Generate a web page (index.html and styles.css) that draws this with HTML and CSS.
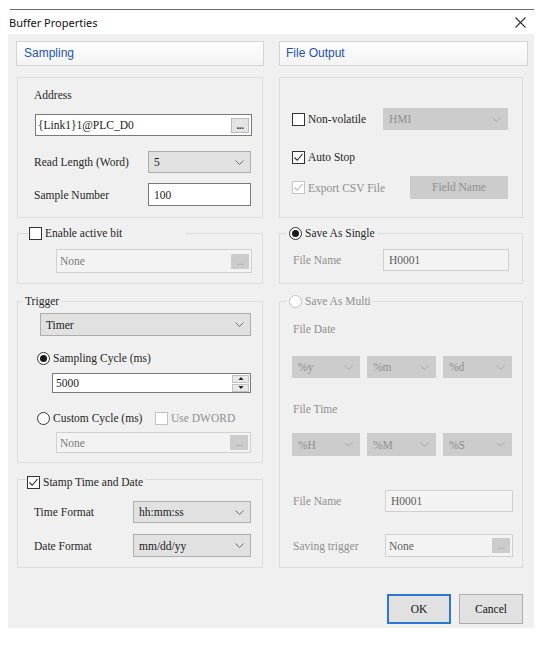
FILE: index.html
```html
<!DOCTYPE html>
<html>
<head>
<meta charset="utf-8">
<title>Buffer Properties</title>
<link rel="stylesheet" href="styles.css">
</head>
<body>
<div class="window">
  <div class="topline"></div>
  <div class="titlebar">
    <span class="title">Buffer Properties</span>
    <svg class="close" viewBox="0 0 11 11"><path d="M0.5 0.5L10.5 10.5M10.5 0.5L0.5 10.5" stroke="#333" stroke-width="1.1" fill="none"/></svg>
  </div>
  <div class="dialog">
    <div class="col col-left">
      <div class="tab">Sampling</div>

      <div class="group g-addr">
        <div class="lbl">Address</div>
        <div class="input addr"><span>{Link1}1@PLC_D0</span><span class="dots-btn">...</span></div>
        <div class="frow r-len">
          <span>Read Length (Word)</span>
          <div class="select"><span>5</span><svg class="chev" viewBox="0 0 9 5"><polyline points="0.5,0.5 4.5,4.5 8.5,0.5"/></svg></div>
        </div>
        <div class="frow r-num">
          <span>Sample Number</span>
          <div class="input"><span>100</span></div>
        </div>
      </div>

      <div class="group g-enable">
        <div class="legend lg-enable"><span class="cb"></span><span>Enable active bit</span></div>
        <div class="input dis none1"><span>None</span><span class="dots-btn dis">...</span></div>
      </div>

      <div class="group g-trigger">
        <div class="legend lg-trigger"><span>Trigger</span></div>
        <div class="select timer"><span>Timer</span><svg class="chev" viewBox="0 0 9 5"><polyline points="0.5,0.5 4.5,4.5 8.5,0.5"/></svg></div>
        <div class="opt r-samp"><span class="rb on"></span><span>Sampling Cycle (ms)</span></div>
        <div class="input spin">
          <span>5000</span>
          <span class="spin-btns">
            <span class="spin-btn"><svg viewBox="0 0 7 4"><polygon points="0,4 3.5,0 7,4"/></svg></span>
            <span class="spin-btn"><svg viewBox="0 0 7 4"><polygon points="0,0 3.5,4 7,0"/></svg></span>
          </span>
        </div>
        <div class="opt r-custom"><span class="rb"></span><span class="custom-lbl">Custom Cycle (ms)</span><span class="cb dis"></span><span class="muted">Use DWORD</span></div>
        <div class="input dis none2"><span>None</span><span class="dots-btn dis">...</span></div>
      </div>

      <div class="group g-stamp">
        <div class="legend lg-stamp"><span class="cb on"><svg viewBox="0 0 11 11"><polyline points="1.5,5.5 4.2,8.3 9.5,2"/></svg></span><span>Stamp Time and Date</span></div>
        <div class="frow r-time">
          <span>Time Format</span>
          <div class="select"><span>hh:mm:ss</span><svg class="chev" viewBox="0 0 9 5"><polyline points="0.5,0.5 4.5,4.5 8.5,0.5"/></svg></div>
        </div>
        <div class="frow r-date">
          <span>Date Format</span>
          <div class="select"><span>mm/dd/yy</span><svg class="chev" viewBox="0 0 9 5"><polyline points="0.5,0.5 4.5,4.5 8.5,0.5"/></svg></div>
        </div>
      </div>
    </div>

    <div class="col col-right">
      <div class="tab tab-right">File Output</div>

      <div class="group g-out">
        <div class="frow r-nv">
          <span class="opt"><span class="cb"></span><span>Non-volatile</span></span>
          <div class="select dis"><span>HMI</span><svg class="chev" viewBox="0 0 9 5"><polyline points="0.5,0.5 4.5,4.5 8.5,0.5"/></svg></div>
        </div>
        <div class="opt r-auto"><span class="cb on"><svg viewBox="0 0 11 11"><polyline points="1.5,5.5 4.2,8.3 9.5,2"/></svg></span><span>Auto Stop</span></div>
        <div class="frow r-csv">
          <span class="opt"><span class="cb on dis"><svg viewBox="0 0 11 11"><polyline points="1.5,5.5 4.2,8.3 9.5,2"/></svg></span><span class="muted">Export CSV File</span></span>
          <div class="btn-dis">Field Name</div>
        </div>
      </div>

      <div class="group g-single">
        <div class="legend lg-single"><span class="rb on"></span><span>Save As Single</span></div>
        <div class="frow r-sname">
          <span class="muted">File Name</span>
          <div class="input dis"><span class="val">H0001</span></div>
        </div>
      </div>

      <div class="group g-multi">
        <div class="legend lg-multi"><span class="rb dis"></span><span class="muted">Save As Multi</span></div>
        <div class="lbl muted m-date">File Date</div>
        <div class="sel-row sr-date">
          <div class="select dis s68"><span>%y</span><svg class="chev" viewBox="0 0 9 5"><polyline points="0.5,0.5 4.5,4.5 8.5,0.5"/></svg></div>
          <div class="select dis s69"><span>%m</span><svg class="chev" viewBox="0 0 9 5"><polyline points="0.5,0.5 4.5,4.5 8.5,0.5"/></svg></div>
          <div class="select dis s69"><span>%d</span><svg class="chev" viewBox="0 0 9 5"><polyline points="0.5,0.5 4.5,4.5 8.5,0.5"/></svg></div>
        </div>
        <div class="lbl muted m-time">File Time</div>
        <div class="sel-row sr-time">
          <div class="select dis s68"><span>%H</span><svg class="chev" viewBox="0 0 9 5"><polyline points="0.5,0.5 4.5,4.5 8.5,0.5"/></svg></div>
          <div class="select dis s69"><span>%M</span><svg class="chev" viewBox="0 0 9 5"><polyline points="0.5,0.5 4.5,4.5 8.5,0.5"/></svg></div>
          <div class="select dis s69"><span>%S</span><svg class="chev" viewBox="0 0 9 5"><polyline points="0.5,0.5 4.5,4.5 8.5,0.5"/></svg></div>
        </div>
        <div class="frow r-mname">
          <span class="muted">File Name</span>
          <div class="input dis"><span class="val">H0001</span></div>
        </div>
        <div class="frow r-mtrig">
          <span class="muted">Saving trigger</span>
          <div class="input dis"><span class="val">None</span><span class="dots-btn dis">...</span></div>
        </div>
      </div>

      <div class="buttons">
        <div class="btn btn-ok">OK</div>
        <div class="btn">Cancel</div>
      </div>
    </div>
  </div>
</div>
</body>
</html>
```

FILE: styles.css
```css
* { box-sizing: border-box; }
html, body { margin: 0; padding: 0; background: #ffffff; }
body {
  font-family: "Liberation Serif", "Times New Roman", serif;
  font-size: 11.5px;
  color: #262626;
  width: 557px;
  height: 646px;
  overflow: hidden;
}
.window { width: 526px; margin-left: 8px; }
.topline { height: 1px; margin-top: 9px; margin-left: 2px; background: #707070; }
.titlebar {
  height: 24px;
  display: flex;
  align-items: center;
  justify-content: space-between;
  padding: 0 8px 0 1px;
}
.title { font-family: "Noto Sans", "Liberation Sans", sans-serif; font-size: 11px; color: #111; }
.close { width: 11px; height: 11px; display: block; }

.dialog {
  height: 594px;
  background: #f0f0f0;
  display: flex;
  padding: 7px 0 0 8px;
}
.col { display: flex; flex-direction: column; }
.col-left { width: 248px; }
.col-right { width: 249px; margin-left: 15px; }

.tab {
  height: 25px;
  border: 1px solid #d4d4d4;
  background: linear-gradient(#fefefe, #f3f3f3);
  font-family: "Liberation Sans", Arial, sans-serif;
  font-size: 12px;
  color: #2354ac;
  line-height: 23px;
  padding-left: 7px;
}
.tab-right { padding-left: 6px; }

.group { border: 1px solid #dcdcdc; display: flex; flex-direction: column; align-items: flex-start; }
.col-left .group { width: 246px; margin-left: 1px; }
.col-right .group { width: 244px; }

.legend {
  display: flex;
  align-items: center;
  height: 14px;
  margin-top: -8px;
  background: #f0f0f0;
  padding: 0 2px;
  gap: 3px;
  white-space: nowrap;
}

.lbl { line-height: 14px; height: 14px; }
.muted { color: #8f8f8f; }

/* controls */
.input {
  display: flex;
  align-items: center;
  justify-content: space-between;
  border: 1px solid #7a7a7a;
  background: #ffffff;
  padding-left: 3px;
  color: #1a1a1a;
}
.input.dis { background: #f3f3f3; border-color: #d0d0d0; color: #7a7a7a; }
.input .val { color: #5e5e5e; }
.select {
  display: flex;
  align-items: center;
  justify-content: space-between;
  border: 1px solid #adadad;
  background: #e1e1e1;
  padding: 0 6px 0 5px;
  color: #1a1a1a;
}
.select.dis { background: #cccccc; border-color: #cccccc; color: #8f8f8f; }
.chev { width: 9px; height: 5px; display: block; }
.chev polyline { fill: none; stroke: #6b6b6b; stroke-width: 1; }
.select.dis .chev polyline { stroke: #a8a8a8; }

.dots-btn {
  width: 18px;
  height: 15px;
  margin-right: 2px;
  border: 1px solid #b9b9b9;
  background: #e4e4e4;
  font-family: "Liberation Sans", Arial, sans-serif;
  font-weight: bold;
  font-size: 10px;
  line-height: 14px;
  text-align: center;
  color: #1f2f55;
  letter-spacing: -0.5px;
}
.dots-btn.dis { border-color: #cccccc; background: #cccccc; color: #9a9a9a; font-weight: normal; }

.cb {
  width: 13px; height: 13px;
  border: 1px solid #333;
  background: #fff;
  flex: none;
  display: flex; align-items: center; justify-content: center;
}
.cb svg { width: 11px; height: 11px; display: block; }
.cb svg polyline { fill: none; stroke: #222; stroke-width: 1.1; }
.cb.dis { border-color: #c4c4c4; }
.cb.dis svg polyline { stroke: #b8b8b8; }

.rb {
  width: 13px; height: 13px;
  border: 1px solid #333;
  border-radius: 50%;
  background: #fff;
  flex: none;
  display: flex; align-items: center; justify-content: center;
}
.rb.on::after { content: ""; width: 7px; height: 7px; border-radius: 50%; background: #1a1a1a; }
.rb.dis { border-color: #c4c4c4; }

.opt { display: flex; align-items: center; gap: 3px; height: 14px; white-space: nowrap; }

.frow { display: grid; align-items: center; }

/* left: address group */
.g-addr { height: 141px; padding: 10px 0 0 16px; margin-top: 11px; }
.addr { margin-top: 12px; margin-left: 1px; width: 217px; height: 22px; padding-left: 2px; }
.r-len { margin-top: 15px; grid-template-columns: 114px 103px; height: 22px; }
.r-len .select { height: 22px; }
.r-num { margin-top: 10px; grid-template-columns: 114px 103px; height: 23px; }
.r-num .input { height: 23px; padding-left: 5px; }

/* enable group */
.g-enable { margin-top: 15px; height: 51px; }
.lg-enable { margin-left: 10px; padding-left: 1px; width: 157px; }
.none1 { margin-top: 9px; margin-left: 38px; width: 196px; height: 24px; }

/* trigger group */
.g-trigger { margin-top: 17px; height: 162px; }
.lg-trigger { margin-left: 5px; }
.timer { margin-top: 5px; margin-left: 22px; width: 211px; height: 23px; }
.r-samp { margin-top: 15px; margin-left: 19px; }
.spin { margin-top: 8px; margin-left: 34px; width: 199px; height: 20px; }
.spin-btns { display: flex; flex-direction: column; gap: 1px; margin-right: 1px; }
.spin-btn {
  width: 17px; height: 8px;
  border: 1px solid #c2c2c2;
  background: #e8e8e8;
  display: flex; align-items: center; justify-content: center;
}
.spin-btn svg { width: 6px; height: 3px; display: block; fill: #222; }
.r-custom { margin-top: 18px; margin-left: 19px; }
.custom-lbl { width: 99px; }
.none2 { margin-top: 7px; margin-left: 38px; width: 195px; height: 21px; }

/* stamp group */
.g-stamp { margin-top: 16px; height: 89px; }
.lg-stamp { margin-top: -5px; margin-left: 8px; padding-left: 1px; }
.r-time { margin-top: 12px; margin-left: 16px; grid-template-columns: 99px 118px; height: 22px; }
.r-time .select { height: 22px; }
.r-date { margin-top: 11px; margin-left: 16px; grid-template-columns: 99px 118px; height: 23px; }
.r-date .select { height: 23px; }

/* right: output group */
.g-out { height: 141px; margin-top: 11px; }
.r-nv { margin-top: 30px; margin-left: 12px; grid-template-columns: 91px 125px; height: 22px; }
.r-nv .select { height: 22px; }
.r-auto { margin-top: 20px; margin-left: 12px; }
.r-csv { margin-top: 12px; margin-left: 12px; grid-template-columns: 118px 98px; height: 23px; }
.btn-dis {
  height: 23px;
  background: #cccccc;
  color: #8f8f8f;
  text-align: center;
  line-height: 23px;
}

/* save single */
.g-single { margin-top: 15px; height: 51px; }
.lg-single { margin-left: 7px; }
.r-sname { margin-top: 9px; margin-left: 13px; grid-template-columns: 90px 126px; height: 22px; }
.r-sname .input { height: 22px; padding-left: 5px; }

/* save multi */
.g-multi { margin-top: 17px; height: 267px; }
.lg-multi { margin-left: 7px; }
.m-date { margin-top: 14px; margin-left: 13px; }
.sel-row { display: flex; gap: 7px; margin-left: 12px; }
.sr-date { margin-top: 20px; height: 22px; }
.sr-time { margin-top: 17px; height: 23px; }
.sel-row .select { height: 100%; }
.s68 { width: 68px; }
.s69 { width: 69px; }
.m-time { margin-top: 24px; margin-left: 13px; }
.r-mname { margin-top: 34px; margin-left: 13px; grid-template-columns: 92px 128px; height: 22px; }
.r-mname .input { height: 22px; padding-left: 5px; }
.r-mtrig { margin-top: 22px; margin-left: 13px; grid-template-columns: 92px 128px; height: 23px; }
.r-mtrig .input { height: 23px; padding-left: 3px; }

/* buttons */
.buttons { display: flex; justify-content: flex-end; gap: 8px; padding-right: 5px; margin-top: 26px; }
.btn {
  width: 64px; height: 30px;
  border: 1px solid #adadad;
  background: #e1e1e1;
  text-align: center;
  line-height: 28px;
  color: #111;
}
.btn-ok { border: 2px solid #2a78d2; line-height: 26px; }
```
